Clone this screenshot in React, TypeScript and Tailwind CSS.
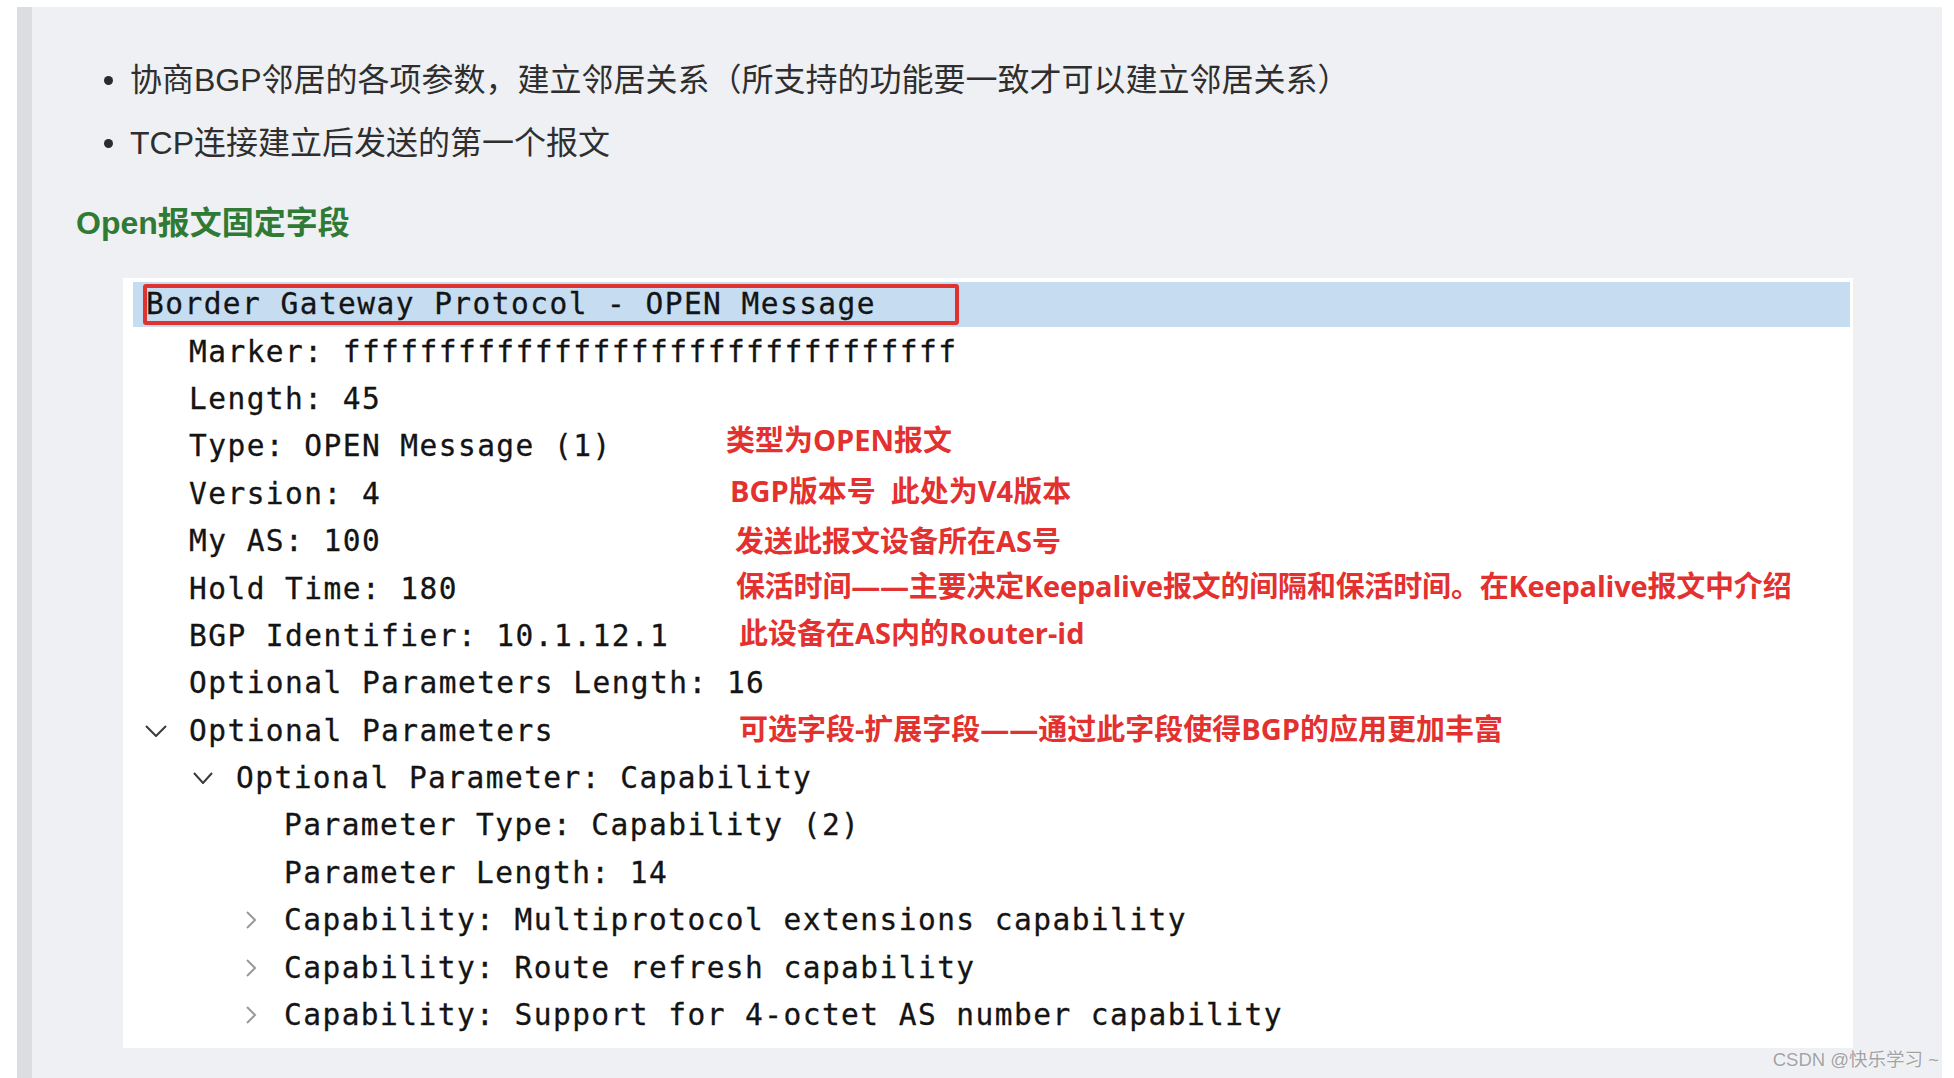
import React from 'react';

type Row = {
  kind: 'l1' | 'l1open' | 'l2open' | 'l3' | 'l3closed';
  text: string;
  note?: string;
  notePad?: string;
};

const rows: Row[] = [
  { kind: 'l1', text: 'Marker: ffffffffffffffffffffffffffffffff' },
  { kind: 'l1', text: 'Length: 45' },
  { kind: 'l1', text: 'Type: OPEN Message (1)', note: '类型为OPEN报文', notePad: 'pl-0 mb-[14px] tracking-normal' },
  { kind: 'l1', text: 'Version: 4', note: 'BGP版本号  此处为V4版本', notePad: 'pl-[4px] mb-[6px] tracking-normal' },
  { kind: 'l1', text: 'My AS: 100', note: '发送此报文设备所在AS号', notePad: 'pl-[9px] mb-[2px] tracking-normal' },
  {
    kind: 'l1',
    text: 'Hold Time: 180',
    note: '保活时间——主要决定Keepalive报文的间隔和保活时间。在Keepalive报文中介绍',
    notePad: 'pl-[10px] mb-[6px] tracking-[-0.2px]',
  },
  {
    kind: 'l1',
    text: 'BGP Identifier: 10.1.12.1',
    note: '此设备在AS内的Router-id',
    notePad: 'pl-[13px] mb-[6px] tracking-normal',
  },
  { kind: 'l1', text: 'Optional Parameters Length: 16' },
  {
    kind: 'l1open',
    text: 'Optional Parameters',
    note: '可选字段-扩展字段——通过此字段使得BGP的应用更加丰富',
    notePad: 'pl-[13px] mb-[4px] tracking-normal',
  },
  { kind: 'l2open', text: 'Optional Parameter: Capability' },
  { kind: 'l3', text: 'Parameter Type: Capability (2)' },
  { kind: 'l3', text: 'Parameter Length: 14' },
  { kind: 'l3closed', text: 'Capability: Multiprotocol extensions capability' },
  { kind: 'l3closed', text: 'Capability: Route refresh capability' },
  { kind: 'l3closed', text: 'Capability: Support for 4-octet AS number capability' },
];

const ChevronDown = ({ w }: { w: number }) => (
  <svg width={w} height={12} viewBox={`0 0 ${w} 12`} className="shrink-0">
    <polyline points={`1,1 ${w / 2},11 ${w - 1},1`} fill="none" stroke="#3a3a3a" strokeWidth="2" />
  </svg>
);

const ChevronRight = () => (
  <svg width={12} height={18} viewBox="0 0 12 18" className="shrink-0">
    <polyline points="2,1 10,9 2,17" fill="none" stroke="#9a9a9a" strokeWidth="2" />
  </svg>
);

const Lead = ({ row }: { row: Row }) => {
  if (row.kind === 'l1open') {
    return (
      <div className="w-[603px] shrink-0 flex items-center pl-[22px]">
        <ChevronDown w={22} />
        <span className="ml-[22px] whitespace-pre">{row.text}</span>
      </div>
    );
  }
  if (row.kind === 'l2open') {
    return (
      <div className="w-[603px] shrink-0 flex items-center pl-[70px]">
        <ChevronDown w={20} />
        <span className="ml-[23px] whitespace-pre">{row.text}</span>
      </div>
    );
  }
  if (row.kind === 'l3closed') {
    return (
      <div className="w-[603px] shrink-0 flex items-center pl-[122px]">
        <ChevronRight />
        <span className="ml-[27px] whitespace-pre">{row.text}</span>
      </div>
    );
  }
  if (row.kind === 'l3') {
    return (
      <div className="w-[603px] shrink-0 flex items-center pl-[161px]">
        <span className="whitespace-pre">{row.text}</span>
      </div>
    );
  }
  return (
    <div className="w-[603px] shrink-0 flex items-center pl-[66px]">
      <span className="whitespace-pre">{row.text}</span>
    </div>
  );
};

const Bullet = ({ children }: { children: React.ReactNode }) => (
  <li className="flex items-center h-[48px]">
    <span className="ml-[28px] w-[9px] h-[9px] rounded-full bg-[#2b2b2b] shrink-0" />
    <span className="ml-[17px] whitespace-nowrap">{children}</span>
  </li>
);

export default function App() {
  return (
    <div className="relative w-[1954px] h-[1078px] bg-white flex flex-col overflow-hidden">
      <div className="h-[7px] shrink-0" />
      <div className="flex flex-1">
        <div className="w-[17px] shrink-0" />
        <div className="w-[15px] shrink-0 bg-[#dcdde1]" />
        <main className="w-[1910px] shrink-0 bg-[#eef0f4] pl-[44px]">
          <ul className="pt-[49px] flex flex-col gap-[15px] text-[32px] text-[#2e2e2e] font-['Liberation_Sans','Noto_Sans_CJK_SC',sans-serif]">
            <Bullet>协商BGP邻居的各项参数，建立邻居关系（所支持的功能要一致才可以建立邻居关系）</Bullet>
            <Bullet>TCP连接建立后发送的第一个报文</Bullet>
          </ul>

          <h3 className="mt-[32px] h-[48px] flex items-center text-[32px] font-bold text-[#2f7a35] font-['Liberation_Sans','Noto_Sans_CJK_SC',sans-serif]">
            Open报文固定字段
          </h3>

          <div className="mt-[31px] ml-[47px] w-[1730px] bg-white pt-[3px] pb-[9px] text-[29.5px] tracking-[1.45px] text-[#141414] [-webkit-text-stroke:0.3px_#141414] font-['DejaVu_Sans_Mono',monospace]">
            <div className="relative ml-[10px] mr-[3px] my-[1px] h-[45px] bg-[#c6dcf1] flex items-center pl-[13px]">
              <span className="whitespace-pre">Border Gateway Protocol - OPEN Message</span>
              <div className="absolute left-[10px] top-[2px] w-[816px] h-[41px] border-4 border-[#df3331] rounded-[3px]" />
            </div>

            {rows.map((row, i) => (
              <div key={i} className="flex items-center h-[47.4px]">
                <Lead row={row} />
                {row.note && (
                  <span
                    className={`${row.notePad} whitespace-pre [-webkit-text-stroke:0] text-[29px] font-bold text-[#e3312f] font-['Open_Sans','Noto_Sans_CJK_SC',sans-serif]`}
                  >
                    {row.note}
                  </span>
                )}
              </div>
            ))}
          </div>
        </main>
        <div className="flex-1" />
      </div>

      <div className="absolute right-[15px] top-[1048px] leading-[24px] text-[18.5px] text-[#a3a3a3] font-['Liberation_Sans','Noto_Sans_CJK_SC',sans-serif] [text-shadow:0_0_2px_#ffffff]">
        CSDN @快乐学习 ~
      </div>
    </div>
  );
}
